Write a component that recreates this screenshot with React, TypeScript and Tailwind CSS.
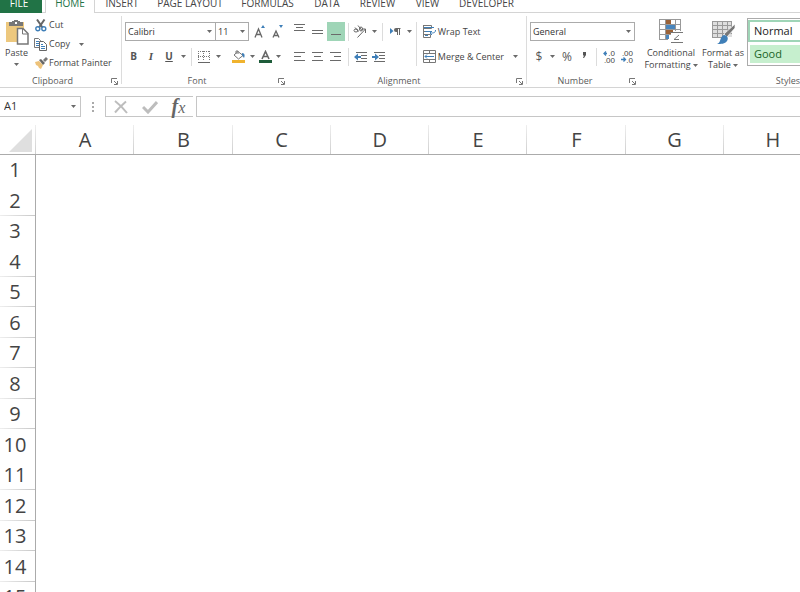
import type { ReactNode } from 'react';
import clsx from 'clsx';

const tabs = [
    { name: 'INSERT', width: 'w-[54px]' },
    { name: 'PAGE LAYOUT', width: 'w-[82px]' },
    { name: 'FORMULAS', width: 'w-[73px]' },
    { name: 'DATA', width: 'w-[46px]' },
    { name: 'REVIEW', width: 'w-[55px]' },
    { name: 'VIEW', width: 'w-[45px]' },
    { name: 'DEVELOPER', width: 'w-[73px]' },
];

const columns = ['A', 'B', 'C', 'D', 'E', 'F', 'G', 'H'];
const rows = Array.from({ length: 15 }, (_, i) => i + 1);
const rowsWithoutLine = [1, 3, 10];

// Shared bits

function Caret() {
    return (
        <svg width="5" height="3" viewBox="0 0 5 3" className="shrink-0" aria-hidden="true">
            <path d="M0 0h5L2.5 3z" fill="#6a6a6a" />
        </svg>
    );
}

function Divider() {
    return <div className="h-[18px] w-px shrink-0 bg-[#dcdcdc]" />;
}

interface ToolProps {
    label: string;
    width: string;
    active?: boolean;
    children: ReactNode;
}

function Tool({ label, width, active, children }: ToolProps) {
    return (
        <button
            type="button"
            aria-label={label}
            className={clsx(
                'flex h-[19px] shrink-0 items-center justify-center',
                width,
                active && 'bg-[#9fd5b7]',
            )}
        >
            {children}
        </button>
    );
}

interface GroupProps {
    title: string;
    width: string;
    launcher?: boolean;
    children: ReactNode;
}

function Group({ title, width, launcher = true, children }: GroupProps) {
    return (
        <section aria-label={title} className={clsx('flex h-[74px] shrink-0 flex-col', width)}>
            <div className="h-[61px]">{children}</div>
            <div
                className={clsx(
                    'relative flex h-[13px] items-center justify-center text-[9px] leading-[13px] text-[#5a5a5a]',
                    launcher && 'pr-4',
                )}
            >
                {title}
                {launcher && (
                    <button type="button" aria-label={`${title} settings`} className="absolute right-[3px] top-1">
                        <svg width="7" height="7" viewBox="0 0 7 7" fill="none" stroke="#777">
                            <path d="M.5 5V.5H6M3 3l3 3M6.5 3v3.5H3" />
                        </svg>
                    </button>
                )}
            </div>
        </section>
    );
}

function GroupLine() {
    return <div className="mt-[3px] h-[68px] w-px shrink-0 bg-[#dcdcdc]" />;
}

interface LinesProps {
    // [x1, x2, y] of every stroke
    lines: number[][];
}

function Lines({ lines }: LinesProps) {
    return (
        <svg width="12" height="15" viewBox="0 0 12 15" stroke="#6a6a6a" aria-hidden="true">
            {lines.map(([x1, x2, y]) => (
                <path key={y} d={`M${x1} ${y}.5H${x2}`} />
            ))}
        </svg>
    );
}

// Ribbon groups

function PasteIcon() {
    return (
        <svg width="24" height="25" viewBox="0 0 24 25" aria-hidden="true">
            <path d="M1 2h18v20H1z" fill="#edc87e" />
            <path d="M4 2h3V1h2V0h4v1h2v1h3v4H4z" fill="#777" />
            <path d="M10 2h2v2h-2z" fill="#fff" />
            <path d="M12.500 8.500H18l5 5v10.500H12.500z" fill="#fff" stroke="#777" strokeWidth="1.500" />
            <path d="M17.500 8.500V14H23" fill="none" stroke="#777" />
        </svg>
    );
}

function CutIcon() {
    return (
        <svg width="12" height="13" viewBox="0 0 12 13" fill="none" aria-hidden="true">
            <path d="M2 .5l5.500 8M9.500.5L4 8.500" stroke="#666" strokeWidth="2" />
            <circle cx="2.800" cy="9.800" r="2" stroke="#3f7fb8" strokeWidth="1.400" />
            <circle cx="8.800" cy="9.800" r="2" stroke="#3f7fb8" strokeWidth="1.400" />
        </svg>
    );
}

function CopyIcon() {
    return (
        <svg width="13" height="13" viewBox="0 0 13 13" fill="#fff" aria-hidden="true">
            <path d="M.5.5h4l2 2v7h-6z" stroke="#777" />
            <path d="M2 3.500h3M2 5.500h3M2 7.500h3" stroke="#3f7fb8" />
            <path d="M5.500 3.500h4l3 3v6h-7z" stroke="#666" />
            <path d="M7 6.500h2M7 8.500h4M7 10.500h4" stroke="#3f7fb8" />
        </svg>
    );
}

function PainterIcon() {
    return (
        <svg width="13" height="12" viewBox="0 0 13 12" aria-hidden="true">
            <path d="M0 5l4-1 4 4-2 4-2-1-1-2-2-1z" fill="#edc27a" />
            <path d="M4 3l2-1 4 4-2 2z" fill="#666" />
            <path d="M8 3l3-3 2 2-3 3z" fill="#777" />
        </svg>
    );
}

function ClipboardGroup() {
    return (
        <Group title="Clipboard" width="w-[121px]">
            <div className="flex">
                <button type="button" className="flex w-[33px] flex-col items-center pt-[7px] text-[9px] leading-[12px]">
                    <PasteIcon />
                    <span className="mt-0.5 mb-1">Paste</span>
                    <Caret />
                </button>
                <div className="flex flex-col items-start gap-px pt-[3px] text-[9px]">
                    <button type="button" className="flex h-[18px] items-center gap-[2px] pl-0.5">
                        <CutIcon />
                        Cut
                    </button>
                    <div className="flex h-[18px] items-center">
                        <button type="button" className="flex items-center gap-[2px] pl-px">
                            <CopyIcon />
                            Copy
                        </button>
                        <Tool label="Copy options" width="w-[22px]"><Caret /></Tool>
                    </div>
                    <button type="button" className="flex h-[18px] items-center gap-px whitespace-nowrap pl-0.5">
                        <PainterIcon />
                        Format Painter
                    </button>
                </div>
            </div>
        </Group>
    );
}

function Combo({ label, value, width }: { label: string; value: string; width: string }) {
    return (
        <div className={clsx('grid h-[19px] shrink-0 items-center border border-[#ababab]', width)}>
            <select
                aria-label={label}
                defaultValue={value}
                className="col-start-1 row-start-1 h-[17px] w-full appearance-none pl-0.5 text-[9px] leading-[17px] text-[#333]"
            >
                <option>{value}</option>
            </select>
            <span className="pointer-events-none col-start-1 row-start-1 mr-[3px] justify-self-end">
                <Caret />
            </span>
        </div>
    );
}

function FontGroup() {
    return (
        <Group title="Font" width="w-[166px]">
            <div className="flex flex-col gap-[6px] pl-[3px] pt-[9px]">
                <div className="flex">
                    <Combo label="Font" value="Calibri" width="w-[91px]" />
                    <Combo label="Font size" value="11" width="-ml-px w-[34px]" />
                    <Tool label="Increase font size" width="ml-[2px] w-[18px]">
                        <svg width="12" height="14" viewBox="0 0 12 14" fill="none">
                            <path d="M1 12.500L4.500 4 8 12.500M2.200 9.500h4.600" stroke="#666" strokeWidth="1.300" />
                            <path d="M7 3h4L9 0z" fill="#3f7fb8" />
                        </svg>
                    </Tool>
                    <Tool label="Decrease font size" width="w-[18px]">
                        <svg width="12" height="14" viewBox="0 0 12 14" fill="none">
                            <path d="M1 12.500L4 6l3 6.500M2 10.500h4" stroke="#666" strokeWidth="1.300" />
                            <path d="M7 0h4L9 3z" fill="#3f7fb8" />
                        </svg>
                    </Tool>
                </div>
                <div className="flex items-center">
                    <Tool label="Bold" width="w-[17px]"><b className="text-[10px] text-[#555]">B</b></Tool>
                    <Tool label="Italic" width="w-[18px]">
                        <i className="font-['Liberation_Serif',serif] text-[11px] font-bold text-[#555]">I</i>
                    </Tool>
                    <Tool label="Underline" width="w-[18px]">
                        <b className="text-[10px] text-[#555] underline">U</b>
                    </Tool>
                    <Tool label="Underline style" width="w-[11px]"><Caret /></Tool>
                    <span className="w-[2px]" />
                    <Divider />
                    <Tool label="Borders" width="w-[24px]">
                        <svg width="12" height="12" viewBox="0 0 12 12" stroke="#777" fill="none">
                            <path d="M0 .5h12M0 5.500h12M.5 0v10M5.500 0v10M11.500 0v10" strokeDasharray="1 1" />
                            <path d="M0 11.500h12" stroke="#666" />
                        </svg>
                    </Tool>
                    <Tool label="Border style" width="w-[4px]"><Caret /></Tool>
                    <Tool label="Fill color" width="ml-[9px] w-[20px]">
                        <svg width="14" height="13" viewBox="0 0 14 13" fill="none">
                            <path d="M2 5l4-3.500 5 4-4.500 3.500z M4 4V1h2v3" stroke="#777" />
                            <path d="M10 3c3 0 3 3 2 5-1-1-1-2-2-3z" fill="#3f7fb8" />
                            <path d="M0 10h13v3H0z" fill="#f0b32e" />
                        </svg>
                    </Tool>
                    <Tool label="Fill color options" width="w-[6px]"><Caret /></Tool>
                    <Tool label="Font color" width="w-[20px]">
                        <svg width="13" height="13" viewBox="0 0 13 13" fill="none">
                            <path d="M3 9l3.500-7.500L10 9M4.500 6.500h4" stroke="#666" strokeWidth="1.600" />
                            <path d="M0 10h13v3H0z" fill="#1e5c3a" />
                        </svg>
                    </Tool>
                    <Tool label="Font color options" width="w-[6px]"><Caret /></Tool>
                </div>
            </div>
        </Group>
    );
}

function IndentIcon({ right }: { right?: boolean }) {
    return (
        <svg width="14" height="12" viewBox="0 0 14 12" fill="none" aria-hidden="true">
            <path d="M2 1.500h11M7 4.500h6M7 7.500h6M2 10.500h11" stroke="#6a6a6a" />
            <path d={right ? 'M0 5h3V2.500L7 6 3 9.500V7H0z' : 'M7 5H4V2.500L0 6l4 3.500V7h3z'} fill="#3f7fb8" />
        </svg>
    );
}

function AlignmentGroup() {
    return (
        <Group title="Alignment" width="w-[238px]">
            <div className="flex pl-[3px] pt-[9px]">
                <div className="flex flex-col gap-[6px]">
                    <div className="flex items-center">
                        <Tool label="Top align" width="w-[18px]"><Lines lines={[[0, 11, 0], [2, 9, 3], [0, 11, 6]]} /></Tool>
                        <Tool label="Middle align" width="w-[18px]"><Lines lines={[[0, 11, 6], [0, 11, 9]]} /></Tool>
                        <Tool label="Bottom align" width="w-[18px]" active><Lines lines={[[1, 11, 10]]} /></Tool>
                        <span className="w-[3px]" />
                        <Divider />
                        <Tool label="Orientation" width="w-[22px]">
                            <svg width="14" height="13" viewBox="0 0 14 13" fill="none" stroke="#666">
                                <ellipse cx="3" cy="5.500" rx="2" ry="1.500" />
                                <path d="M2 2.500l3.500 4M5 .5l4 5M4.500 12.500L12.500 4M12.500 8V4H9" />
                                <ellipse cx="8" cy="4" rx="1.500" ry="2" />
                            </svg>
                        </Tool>
                        <Tool label="Orientation options" width="w-[6px]"><Caret /></Tool>
                        <span className="w-[5px]" />
                        <Divider />
                        <Tool label="Text direction" width="w-[24px]">
                            <svg width="11" height="9" viewBox="0 0 11 9" fill="none">
                                <path d="M0 1l3.500 3L0 7z" fill="#3f7fb8" />
                                <path d="M10.500 1.500H6M7.500 1v7M9.500 1v7" stroke="#666" />
                                <path d="M7 1H6a2 2 0 000 4h1z" fill="#666" />
                            </svg>
                        </Tool>
                        <Tool label="Text direction options" width="w-[4px]"><Caret /></Tool>
                    </div>
                    <div className="flex items-center">
                        <Tool label="Align left" width="w-[18px]"><Lines lines={[[0, 11, 3], [0, 7, 7], [0, 11, 11]]} /></Tool>
                        <Tool label="Center" width="w-[18px]"><Lines lines={[[0, 11, 3], [2, 9, 7], [0, 11, 11]]} /></Tool>
                        <Tool label="Align right" width="w-[18px]"><Lines lines={[[0, 11, 3], [4, 11, 7], [0, 11, 11]]} /></Tool>
                        <span className="w-[3px]" />
                        <Divider />
                        <Tool label="Decrease indent" width="ml-[3px] w-[18px]"><IndentIcon /></Tool>
                        <Tool label="Increase indent" width="w-[18px]"><IndentIcon right /></Tool>
                    </div>
                </div>
                <div className="ml-[5px] h-[44px] w-px bg-[#dcdcdc]" />
                <div className="flex flex-col gap-[6px] pl-[6px] text-[9px]">
                    <button type="button" className="flex h-[19px] items-center gap-[2px] whitespace-nowrap">
                        <svg width="13" height="13" viewBox="0 0 13 13" fill="none">
                            <path d="M.5 0v12.500h7v-3h-7M.5 3.500h8v-3h-8M.5 6.500h5" stroke="#777" />
                            <path d="M1 2.500h10M2 6.500h6M2 10.500h3M12.500 5c0 3-2 3-5 3M9 6L7 8l2 2" stroke="#3f7fb8" />
                        </svg>
                        Wrap Text
                    </button>
                    <div className="flex h-[19px] items-center">
                        <button type="button" className="flex items-center gap-[2px] whitespace-nowrap">
                            <svg width="13" height="13" viewBox="0 0 13 13" fill="none">
                                <path d="M.5.5h12v12H.5zM.5 3.500h12M.5 9.500h12M6.500.5v3M6.500 9.500v3" stroke="#777" />
                                <path d="M2 6.500h9M4 4.500L2 6.500l2 2" stroke="#3f7fb8" />
                            </svg>
                            Merge &amp; Center
                        </button>
                        <Tool label="Merge options" width="w-[22px]"><Caret /></Tool>
                    </div>
                </div>
            </div>
        </Group>
    );
}

function DecimalIcon({ top, bottom, increase }: { top: string; bottom: string; increase?: boolean }) {
    return (
        <svg width="13" height="13" viewBox="0 0 13 13" fill="none" className="font-['Liberation_Sans',sans-serif] text-[8px]" aria-hidden="true">
            <text x="12" y="6" textAnchor="end" fill="#444">{top}</text>
            <text x="12" y="13" textAnchor="end" fill="#444">{bottom}</text>
            <path d={increase ? 'M4 3.500H1M3 1.500L1 3.500l2 2' : 'M0 9.500h4M2.500 7.500l2 2-2 2'} stroke="#3f7fb8" strokeWidth="1.300" />
        </svg>
    );
}

function NumberGroup() {
    return (
        <Group title="Number" width="w-[112px]">
            <div className="flex flex-col gap-[6px] pl-[3px] pt-[9px]">
                <Combo label="Number format" value="General" width="w-[105px]" />
                <div className="flex items-center text-[12px] text-[#555]">
                    <Tool label="Accounting format" width="w-[18px]">$</Tool>
                    <Tool label="Accounting options" width="w-[8px]"><Caret /></Tool>
                    <Tool label="Percent style" width="w-[22px]">%</Tool>
                    <Tool label="Comma style" width="w-[12px]">
                        <svg width="5" height="9" viewBox="0 0 5 9" fill="#555">
                            <path d="M1 0h3v3L2 6H1l1-2.500H1z" />
                        </svg>
                    </Tool>
                    <span className="w-[6px]" />
                    <Divider />
                    <Tool label="Increase decimal" width="ml-[3px] w-[18px]"><DecimalIcon top=".0" bottom=".00" increase /></Tool>
                    <Tool label="Decrease decimal" width="w-[18px]"><DecimalIcon top=".00" bottom=".0" /></Tool>
                </div>
            </div>
        </Group>
    );
}

function StylesGroup() {
    return (
        <Group title="Styles" width="w-[298px]" launcher={false}>
            <div className="flex text-[9px] leading-[12px]">
                <button type="button" className="flex w-[64px] flex-col items-center pt-[6px]">
                    <svg width="26" height="26" viewBox="0 0 26 26" fill="none">
                        <path d="M1 .5h22M1 5.500h22M1 10.500h22M1 15.500h22M1 20.500h9M1.500 0v21M7.500 0v21M12.500 0v12M17.500 0v12M22.500 0v12" stroke="#999" />
                        <path d="M8 1h5v4H8zM8 11h7v4H8z" fill="#9b6237" />
                        <path d="M8 6h9v4H8zM8 16h3v4H8z" fill="#4a86bd" />
                        <path d="M13 14h12v11H13z" fill="#fff" />
                        <path d="M12 13.500h13M13 23.500h12M21 16l-5 4.500h5" stroke="#777" />
                    </svg>
                    <span className="mt-[2px]">Conditional</span>
                    <span className="flex items-center gap-0.5">Formatting<Caret /></span>
                </button>
                <button type="button" className="flex w-[40px] flex-col items-center pt-[6px]">
                    <svg width="26" height="26" viewBox="0 0 26 26" fill="none">
                        <path d="M3 2h19v16H3z" fill="#dedede" />
                        <path d="M2 2.500h20M2 6.500h20M2 10.500h20M2 14.500h20M2 18.500h12M2.500 2v17M7.500 2v17M12.500 2v17M17.500 2v14M21.500 2v10" stroke="#999" />
                        <path d="M25 5v4l-8 9-3-3z" fill="#777" stroke="#fff" strokeWidth=".7" />
                        <path d="M14 16c3 0 5 3 3 6-2 3-6 3-10 3 3-1 3-4 4-6 1-2 2-3 3-3z" fill="#3f7fb8" />
                    </svg>
                    <span className="mt-[2px] whitespace-nowrap">Format as</span>
                    <span className="flex items-center gap-0.5">Table<Caret /></span>
                </button>
                <div className="ml-1 mt-[5px] flex h-[48px] flex-1 flex-col gap-[3px] border border-[#ababab] pt-px text-[11px] leading-[18px]">
                    <button type="button" className="h-[22px] border-2 border-[#9fd5b7] pl-1 text-left leading-[16px] text-[#222]">Normal</button>
                    <button type="button" className="ml-[2px] h-[18px] bg-[#c6efce] pl-1 text-left leading-[16px] text-[#1b6428]">Good</button>
                </div>
            </div>
        </Group>
    );
}

// Formula bar

function FormulaBar() {
    return (
        <div className="flex h-[37px] shrink-0 items-start pt-[8px]">
            <div className="flex h-[21px] w-[81px] shrink-0 items-center border-y border-r border-[#c6c6c6] pr-1">
                <input
                    aria-label="Name box"
                    defaultValue="A1"
                    className="min-w-0 flex-1 pl-1 text-[11px] text-[#333] outline-none"
                />
                <Caret />
            </div>
            <svg width="24" height="21" viewBox="0 0 24 21" fill="#aaa" className="shrink-0" aria-hidden="true">
                <path d="M11 6h2v2h-2zM11 10h2v2h-2zM11 14h2v2h-2z" />
            </svg>
            <div className="flex h-[21px] w-[88px] shrink-0 items-center border-y border-l border-[#c6c6c6]">
                <Tool label="Cancel" width="w-[29px]">
                    <svg width="14" height="14" viewBox="0 0 14 14" fill="none" stroke="#bdbdbd">
                        <path d="M1 1c4 3 8 7 12 12M12 1.500C8 5 4 9 1 12.500" strokeWidth="2" />
                    </svg>
                </Tool>
                <Tool label="Enter" width="w-[29px]">
                    <svg width="16" height="14" viewBox="0 0 16 14" fill="none" stroke="#bdbdbd">
                        <path d="M1 7l5 5 9-10" strokeWidth="3" />
                    </svg>
                </Tool>
                <Tool label="Insert function" width="w-[29px]">
                    <i className="font-['Liberation_Serif',serif] text-[20px] font-bold leading-[19px] text-[#666]">
                        f<span className="text-[16px] font-normal">x</span>
                    </i>
                </Tool>
            </div>
            <input
                aria-label="Formula"
                className="ml-[3px] h-[21px] min-w-0 flex-1 border-y border-l border-[#c6c6c6] px-1 text-[11px] outline-none"
            />
        </div>
    );
}

// Sheet

function Sheet() {
    return (
        <div className="min-h-0 flex-1 overflow-hidden">
            <table className="w-[822px] table-fixed border-separate border-spacing-0 text-[20px] text-[#444]">
                <thead>
                    <tr className="h-[30px]">
                        <th aria-label="Select all" className="w-[36px] border-b border-[#ababab] bg-[linear-gradient(to_bottom,#eee,#cfcfcf)] bg-[length:1px_100%] bg-right bg-no-repeat p-0">
                            <svg width="36" height="29" viewBox="0 0 36 29" aria-hidden="true">
                                <path d="M32 4v23H9z" fill="#dfdfdf" />
                            </svg>
                        </th>
                        {columns.map((column) => (
                            <th
                                key={column}
                                className="border-b border-[#ababab] bg-[linear-gradient(to_bottom,#eee,#cfcfcf)] bg-[length:1px_100%] bg-right bg-no-repeat p-0 font-normal leading-[29px]"
                            >
                                {column}
                            </th>
                        ))}
                    </tr>
                </thead>
                <tbody>
                    {rows.map((row) => (
                        <tr key={row} className="h-[30px] even:h-[31px]">
                            <th
                                className={clsx(
                                    'border-r border-[#ababab] p-0 pr-[5px] font-normal leading-[30px]',
                                    !rowsWithoutLine.includes(row) &&
                                        'bg-[linear-gradient(to_right,#eee,#c8c8c8)] bg-[length:100%_1px] bg-bottom bg-no-repeat',
                                )}
                            >
                                {row}
                            </th>
                            <td colSpan={8} className="p-0" />
                        </tr>
                    ))}
                </tbody>
            </table>
        </div>
    );
}

export default function App() {
    return (
        <div className="flex h-screen flex-col overflow-hidden bg-white font-['Open_Sans','Noto_Sans',sans-serif] text-[#444]">
            <nav className="flex h-[13px] shrink-0 text-[10px] leading-[7px]">
                <button type="button" className="flex w-[42px] shrink-0 justify-center bg-[#217346] pr-1 text-white">FILE</button>
                <div className="w-[3px] shrink-0 border-b border-[#d4d4d4]" />
                <button type="button" className="flex w-[50px] shrink-0 justify-center border-x border-[#d4d4d4] text-[#217346]">
                    HOME
                </button>
                {tabs.map((tab) => (
                    <button
                        key={tab.name}
                        type="button"
                        className={clsx('flex shrink-0 justify-center whitespace-nowrap border-b border-[#d4d4d4]', tab.width)}
                    >
                        {tab.name}
                    </button>
                ))}
                <div className="flex-1 border-b border-[#d4d4d4]" />
            </nav>
            <div className="flex h-[75px] shrink-0 overflow-hidden border-b border-[#d4d4d4]">
                <ClipboardGroup />
                <GroupLine />
                <FontGroup />
                <AlignmentGroup />
                <GroupLine />
                <NumberGroup />
                <StylesGroup />
            </div>
            <FormulaBar />
            <Sheet />
        </div>
    );
}
